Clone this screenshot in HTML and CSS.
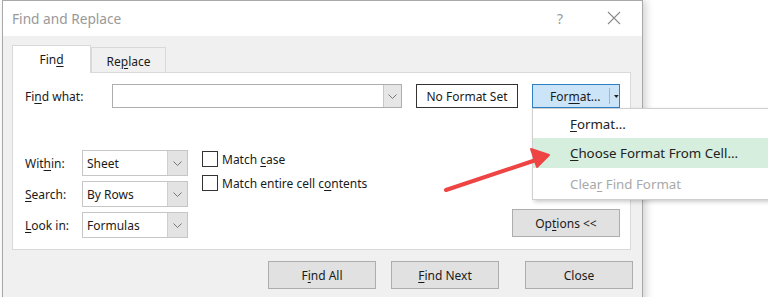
FILE: index.html
```html
<!DOCTYPE html>
<html>
<head>
<meta charset="utf-8">
<link rel="stylesheet" href="styles.css">
</head>
<body>
<div class="dialog">
  <div class="titlebar">
    <span class="title">Find and Replace</span>
    <span class="help">?</span>
    <svg class="close-x" width="14" height="14" viewBox="0 0 14 14"><path d="M1 1L13 13M13 1L1 13" stroke="#8a8a8a" stroke-width="1.1" fill="none"/></svg>
  </div>
  <div class="body">
    <div class="tabs">
      <div class="tab active"><span>Fin<u>d</u></span></div>
      <div class="tab"><span>Re<u>p</u>lace</span></div>
    </div>
    <div class="panel">
      <div class="row-find">
        <span class="label-find">Fi<u>n</u>d what:</span>
        <div class="input">
          <div class="input-field"></div>
          <div class="drop"><svg width="9" height="5" viewBox="0 0 9 5"><path d="M0.5 0.5L4.5 4.5L8.5 0.5" stroke="#777" fill="none"/></svg></div>
        </div>
        <div class="btn nofmt"><span>No Format Set</span></div>
        <div class="btn fmt">
          <span class="fmt-text">For<u>m</u>at...</span>
          <span class="fmt-split"></span>
          <svg class="fmt-arrow" width="5" height="3" viewBox="0 0 5 3"><path d="M0 0H5L2.5 3Z" fill="#222"/></svg>
        </div>
      </div>
      <div class="options">
        <div class="selects">
          <span class="slabel">Wit<u>h</u>in:</span>
          <div class="combo"><span class="cval">Sheet</span><div class="cdrop"><svg width="9" height="5" viewBox="0 0 9 5"><path d="M0.5 0.5L4.5 4.5L8.5 0.5" stroke="#777" fill="none"/></svg></div></div>
          <span class="slabel"><u>S</u>earch:</span>
          <div class="combo"><span class="cval">By Rows</span><div class="cdrop"><svg width="9" height="5" viewBox="0 0 9 5"><path d="M0.5 0.5L4.5 4.5L8.5 0.5" stroke="#777" fill="none"/></svg></div></div>
          <span class="slabel"><u>L</u>ook in:</span>
          <div class="combo"><span class="cval">Formulas</span><div class="cdrop"><svg width="9" height="5" viewBox="0 0 9 5"><path d="M0.5 0.5L4.5 4.5L8.5 0.5" stroke="#777" fill="none"/></svg></div></div>
        </div>
        <div class="checks">
          <label class="check"><span class="box"></span><span class="ctext">Match <u>c</u>ase</span></label>
          <label class="check"><span class="box"></span><span class="ctext">Match entire cell c<u>o</u>ntents</span></label>
        </div>
        <div class="btn opts"><span>Op<u>t</u>ions &lt;&lt;</span></div>
      </div>
    </div>
    <div class="actions">
      <div class="btn act"><span>F<u>i</u>nd All</span></div>
      <div class="btn act next"><span><u>F</u>ind Next</span></div>
      <div class="btn act close"><span>Close</span></div>
    </div>
  </div>
</div>
<div class="menu">
  <div class="mitem"><span><u>F</u>ormat...</span></div>
  <div class="mitem hi"><span><u>C</u>hoose Format From Cell...</span></div>
  <div class="mitem dis"><span>Clea<u>r</u> Find Format</span></div>
</div>
<svg class="arrow" width="768" height="297" viewBox="0 0 768 297">
  <line x1="446" y1="190" x2="536" y2="160" stroke="#ee4444" stroke-width="4" stroke-linecap="round"/>
  <path d="M549 155L531 149L537 167Z" fill="#ee4444" stroke="#ee4444" stroke-width="2" stroke-linejoin="round"/>
</svg>
</body>
</html>
```

FILE: styles.css
```css
* { box-sizing: border-box; }
html, body { margin: 0; padding: 0; }
body {
  width: 768px;
  height: 297px;
  overflow: hidden;
  background: #fff;
  font-family: "Noto Sans", "Open Sans", sans-serif;
  font-size: 12px;
  color: #1a1a1a;
  position: relative;
}
u { text-decoration: underline; text-underline-offset: 2px; }

.dialog {
  margin-left: 2px;
  width: 641px;
  height: 310px;
  border: 1px solid #a8a8a8;
  border-bottom: none;
  background: #f0f0f0;
  box-shadow: 3px 0 8px rgba(0,0,0,0.18);
}
.titlebar {
  height: 35px;
  background: #fff;
  display: flex;
  align-items: center;
  padding-left: 9px;
}
.title {
  font-size: 13.7px;
  color: #999;
  flex: 1;
  margin-top: -1px;
}
.help {
  color: #999;
  font-size: 14px;
  margin-right: 44px;
}
.close-x { margin-right: 21px; margin-top: -2px; }

.body {
  padding: 9px 11px 0 9px;
}
.tabs {
  display: flex;
  align-items: flex-end;
  height: 27px;
}
.tab {
  height: 25px;
  width: 75px;
  border: 1px solid #d9d9d9;
  border-bottom: none;
  background: #f0f0f0;
  display: flex;
  align-items: center;
  justify-content: center;
  padding-top: 2px;
}
.tab.active {
  height: 28px;
  width: 79px;
  background: #fff;
  margin-bottom: -1px;
  position: relative;
  z-index: 1;
  padding-top: 0;
}
.panel {
  background: #fff;
  border: 1px solid #d9d9d9;
  height: 178px;
  padding: 11px 10px 0 12px;
}
.row-find {
  display: flex;
  align-items: center;
  height: 24px;
}
.label-find { width: 87px; }
.input {
  width: 290px;
  height: 24px;
  display: flex;
  border: 1px solid #adadad;
  background: #fff;
}
.input-field { flex: 1; }
.drop {
  width: 18px;
  background: #e6e6e6;
  border-left: 1px solid #c8c8c8;
  display: flex;
  align-items: center;
  justify-content: center;
}
.btn {
  display: flex;
  align-items: center;
  justify-content: center;
  border: 1px solid #adadad;
  background: #e1e1e1;
  flex-shrink: 0;
}
.nofmt {
  margin-left: 14px;
  width: 102px;
  height: 24px;
  background: #fff;
  border: 1px solid #333;
}
.fmt {
  margin-left: 14px;
  width: 88px;
  height: 24px;
  background: #cce4f7;
  border: 1px solid #2f7fc5;
  padding-left: 17px;
  justify-content: flex-start;
}
.fmt-split {
  width: 1px;
  height: 16px;
  background: #9db7cc;
  margin-left: 9px;
}
.fmt-arrow { margin-left: 4px; }

.options {
  display: flex;
  margin-top: 42px;
  height: 88px;
}
.selects {
  display: grid;
  grid-template-columns: 57px 106px;
  grid-auto-rows: 26px;
  row-gap: 5px;
  align-items: center;
}
.combo {
  height: 26px;
  display: flex;
  border: 1px solid #c6c6c6;
  background: #fff;
}
.cval { flex: 1; display: flex; align-items: center; padding-left: 4px; }
.cdrop {
  width: 20px;
  background: #e3e3e3;
  border-left: 1px solid #cfcfcf;
  display: flex;
  align-items: center;
  justify-content: center;
}
.checks {
  margin-left: 14px;
  display: flex;
  flex-direction: column;
  gap: 7px;
}
.check {
  display: flex;
  align-items: center;
  height: 17px;
}
.ctext { margin-top: 2px; }
.box {
  width: 16px;
  height: 16px;
  border: 1px solid #333;
  background: #fff;
  margin-right: 4px;
}
.opts {
  margin-left: auto;
  align-self: flex-end;
  width: 108px;
  height: 28px;
  margin-bottom: 1px;
}
.actions {
  display: flex;
  justify-content: flex-end;
  margin-top: 11px;
  margin-right: -2px;
}
.act {
  width: 108px;
  height: 28px;
}
.next { margin-left: 15px; }
.close { margin-left: 26px; }

.menu {
  position: absolute;
  left: 532px;
  top: 108px;
  width: 250px;
  height: 92px;
  background: #fff;
  border: 1px solid #cfcfcf;
  box-shadow: 2px 2px 4px rgba(0,0,0,0.2);
}
.mitem {
  height: 29px;
  display: flex;
  align-items: center;
  padding-left: 37px;
  font-size: 13.3px;
  color: #222;
}
.mitem.hi { background: #d5eedd; height: 30px; }
.mitem.dis { color: #a9a9a9; height: 31px; }

.arrow {
  position: absolute;
  left: 0;
  top: 0;
  pointer-events: none;
}
```
